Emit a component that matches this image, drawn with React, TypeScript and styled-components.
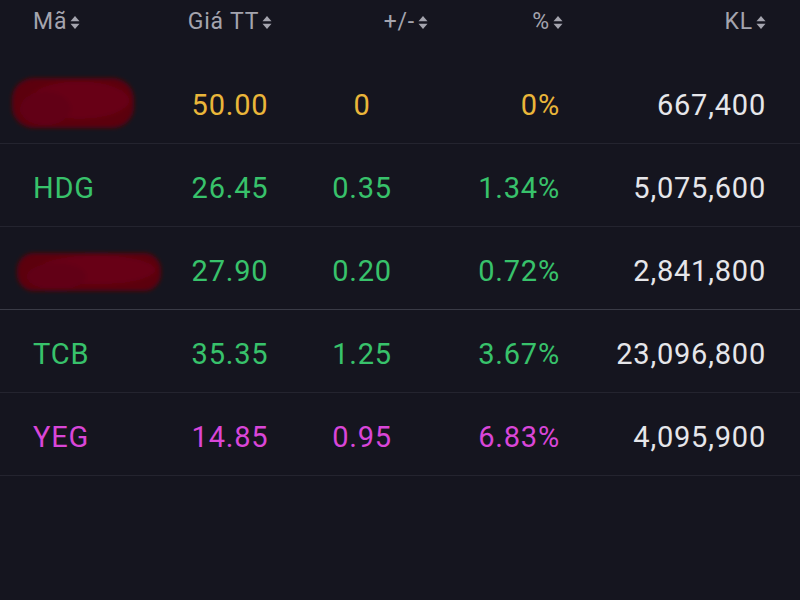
import React from "react";
import styled, { createGlobalStyle } from "styled-components";

const GlobalStyle = createGlobalStyle`
  html, body {
    margin: 0;
    padding: 0;
    background: #15151f;
  }
  body {
    width: 800px;
    height: 600px;
    overflow: hidden;
    font-family: Roboto, "Liberation Sans", sans-serif;
  }
`;

const Board = styled.div`
  width: 800px;
  height: 600px;
  background: #15151f;
  display: flex;
  flex-direction: column;
`;

const COLS = "164px 132px 132px 135px 203px 34px";

const HeaderRow = styled.div`
  display: grid;
  grid-template-columns: ${COLS};
  height: 61px;
  align-items: start;
  padding-top: 9px;
  box-sizing: border-box;
`;

type Align = "start" | "center" | "end";

const HeadCell = styled.div<{ $align: Align; $pad?: number }>`
  display: flex;
  align-items: center;
  justify-content: ${(p) => (p.$align === "start" ? "flex-start" : p.$align === "end" ? "flex-end" : "center")};
  padding-left: ${(p) => (p.$align === "start" ? p.$pad ?? 0 : 0)}px;
  gap: 3px;
  font-size: 23px;
  letter-spacing: 0.8px;
  color: #a4a4ae;
  line-height: 26px;
  white-space: nowrap;
`;

const Row = styled.div<{ $strong?: boolean }>`
  display: grid;
  grid-template-columns: ${COLS};
  height: 83px;
  align-items: center;
  border-bottom: 1px solid ${(p) => (p.$strong ? "#3a3b46" : "#24242f")};
  box-sizing: border-box;
`;

const Cell = styled.div<{ $align: Align; $color: string; $pad?: number; $padRight?: number }>`
  display: flex;
  align-items: center;
  justify-content: ${(p) => (p.$align === "start" ? "flex-start" : p.$align === "end" ? "flex-end" : "center")};
  padding-left: ${(p) => p.$pad ?? 0}px;
  padding-right: ${(p) => p.$padRight ?? 0}px;
  padding-top: 5px;
  font-size: 29px;
  color: ${(p) => p.$color};
  white-space: nowrap;
  letter-spacing: 0.8px;
`;

const Redaction = styled.svg<{ $shift: number; $drop: number }>`
  display: block;
  margin-left: ${(p) => p.$shift}px;
  margin-top: ${(p) => p.$drop}px;
  overflow: visible;
`;

const SortIcon = () => (
  <svg width="10" height="15" viewBox="0 0 10 15" aria-hidden="true">
    <path d="M0.5 6.3 L5 1 L9.5 6.3 Z" fill="#a4a4ae" />
    <path d="M0.5 8.7 L9.5 8.7 L5 14 Z" fill="#a4a4ae" />
  </svg>
);

const YELLOW = "#eab63a";
const GREEN = "#38c26b";
const PINK = "#d946d8";
const WHITE = "#e6e6ea";

type Stock = {
  code: string | null;
  price: string;
  change: string;
  pct: string;
  vol: string;
  color: string;
  blob?: { w: number; h: number; shift: number; drop: number };
  strong?: boolean;
};

const stocks: Stock[] = [
  { code: null, price: "50.00", change: "0", pct: "0%", vol: "667,400", color: YELLOW, blob: { w: 126, h: 56, shift: -23, drop: -4 } },
  { code: "HDG", price: "26.45", change: "0.35", pct: "1.34%", vol: "5,075,600", color: GREEN },
  { code: null, price: "27.90", change: "0.20", pct: "0.72%", vol: "2,841,800", color: GREEN, blob: { w: 148, h: 44, shift: -18, drop: 2 }, strong: true },
  { code: "TCB", price: "35.35", change: "1.25", pct: "3.67%", vol: "23,096,800", color: GREEN },
  { code: "YEG", price: "14.85", change: "0.95", pct: "6.83%", vol: "4,095,900", color: PINK },
];

const Blob: React.FC<{ w: number; h: number; shift: number; drop: number; id: string }> = ({ w, h, shift, drop, id }) => (
  <Redaction width={w} height={h} viewBox={`0 0 ${w} ${h}`} $shift={shift} $drop={drop} aria-hidden="true">
    <defs>
      <filter id={id} x="-20%" y="-30%" width="140%" height="160%">
        <feGaussianBlur stdDeviation="2" />
      </filter>
    </defs>
    <g filter={`url(#${id})`}>
      <rect x="2" y="3" width={w - 4} height={h - 6} rx={h / 2.6} fill="#5c0410" />
      <ellipse cx={w * 0.55} cy={h * 0.45} rx={w * 0.4} ry={h * 0.34} fill="#680512" />
      <ellipse cx={w * 0.28} cy={h * 0.6} rx={w * 0.2} ry={h * 0.3} fill="#620514" />
    </g>
  </Redaction>
);

export default function App() {
  return (
    <Board>
      <GlobalStyle />
      <HeaderRow>
        <HeadCell $align="start" $pad={33}>Mã<SortIcon /></HeadCell>
        <HeadCell $align="center">Giá TT<SortIcon /></HeadCell>
        <HeadCell $align="end">+/-<SortIcon /></HeadCell>
        <HeadCell $align="end">%<SortIcon /></HeadCell>
        <HeadCell $align="end">KL<SortIcon /></HeadCell>
        <div />
      </HeaderRow>
      {stocks.map((s, i) => (
        <Row key={i} $strong={s.strong}>
          <Cell $align="start" $color={s.color} $pad={33}>
            {s.blob ? <Blob {...s.blob} id={`blur${i}`} /> : s.code}
          </Cell>
          <Cell $align="center" $color={s.color}>{s.price}</Cell>
          <Cell $align="center" $color={s.color}>{s.change}</Cell>
          <Cell $align="end" $color={s.color} $padRight={3}>{s.pct}</Cell>
          <Cell $align="end" $color={WHITE}>{s.vol}</Cell>
          <div />
        </Row>
      ))}
    </Board>
  );
}
